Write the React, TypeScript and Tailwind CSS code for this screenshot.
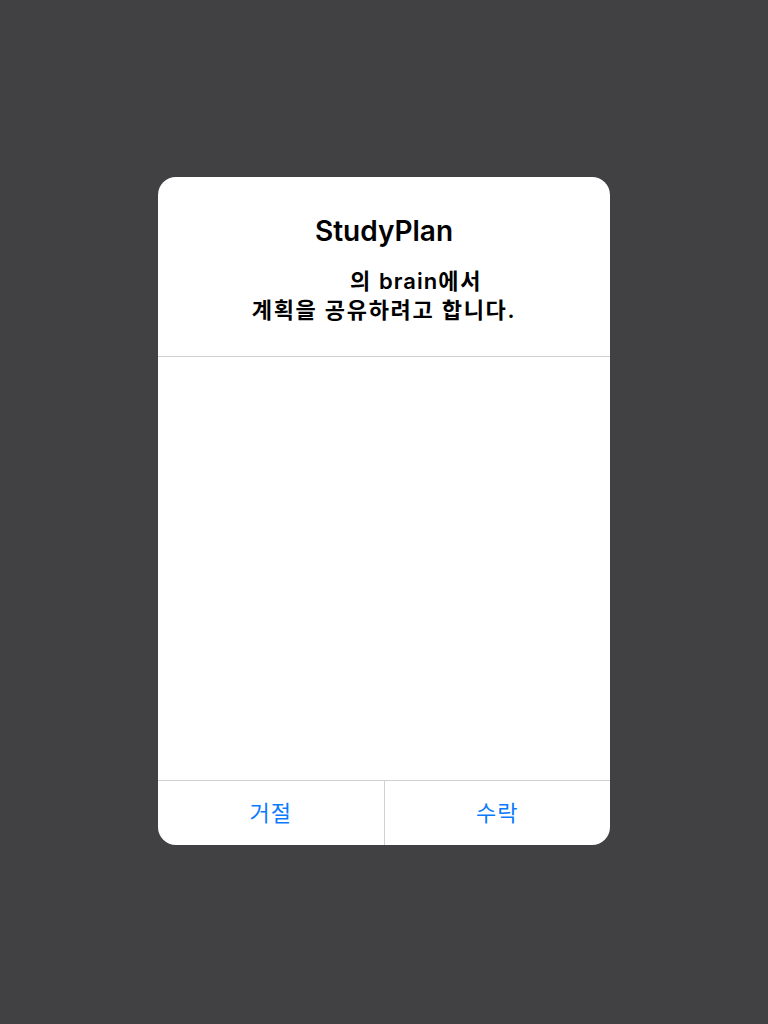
export default function App() {
  return (
    <div
      className="min-h-[1024px] w-full bg-[#414143] flex justify-center pt-[177px]"
      style={{ fontFamily: 'Inter, "Noto Sans CJK KR", sans-serif' }}
    >
      <div className="w-[452px] h-[668px] bg-white rounded-[18px] flex flex-col overflow-hidden">
        <div className="h-[180px] shrink-0 flex flex-col items-center pt-[38px] border-b border-[#d0d0d2]">
          <h2 className="text-[28px] font-semibold text-black leading-[32px]">StudyPlan</h2>
          <p className="mt-[20px] text-[22px] font-semibold tracking-[1.7px] text-black leading-[29px] text-center">
            <span className="inline-block w-[64px]"></span>의 <span className="tracking-[1px]">brain</span>에서
            <br />
            계획을 공유하려고 합니다.
          </p>
        </div>
        <div className="flex-1" />
        <div className="h-[65px] shrink-0 flex border-t border-[#d0d0d2]">
          <button className="flex-1 text-[22px] tracking-[1px] text-[#0a7aff] border-r border-[#d0d0d2]">거절</button>
          <button className="flex-1 text-[22px] tracking-[1px] text-[#0a7aff]">수락</button>
        </div>
      </div>
    </div>
  );
}
